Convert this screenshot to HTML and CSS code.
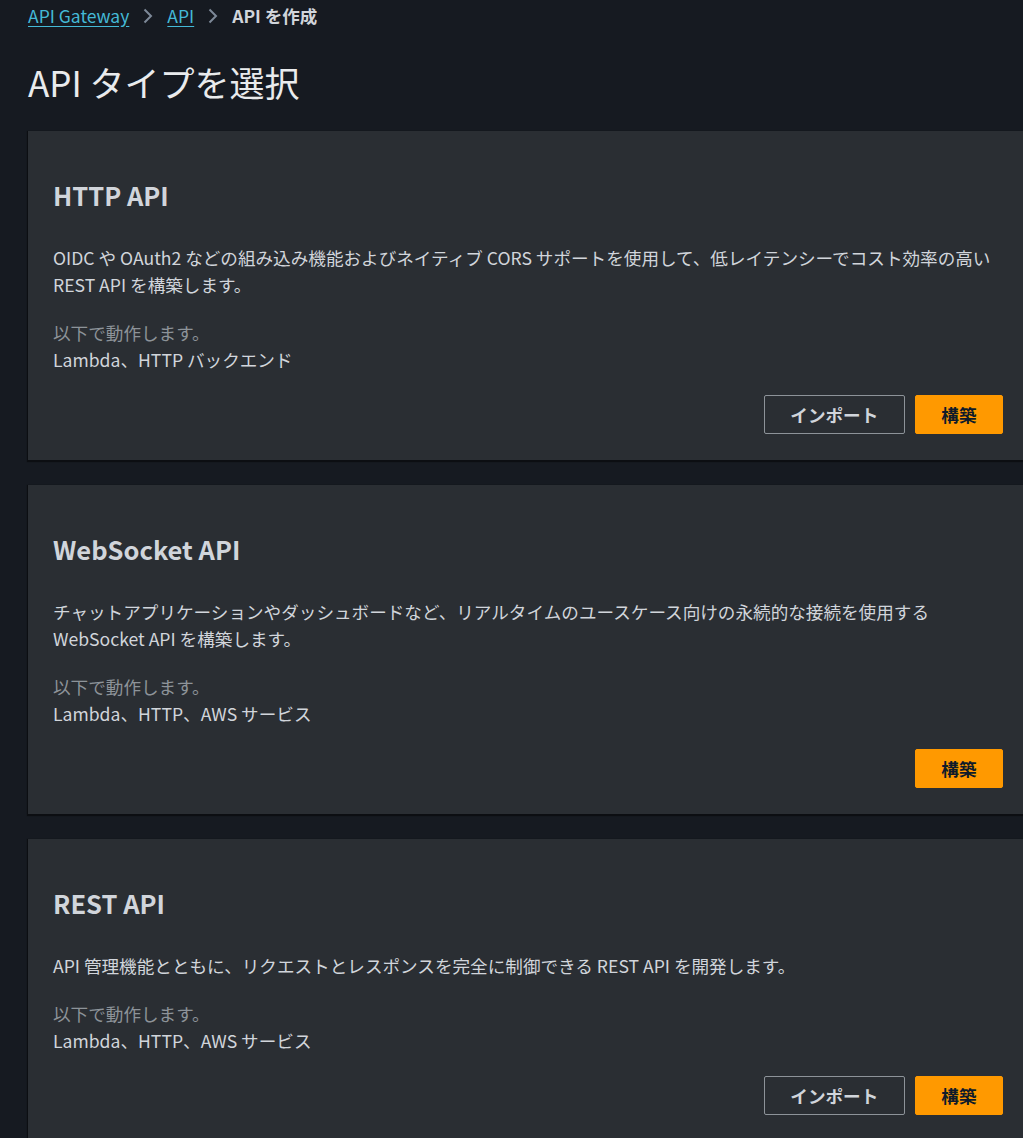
FILE: index.html
```html
<!DOCTYPE html>
<html lang="ja">
<head>
<meta charset="utf-8">
<title>API を作成</title>
<link rel="stylesheet" href="styles.css">
</head>
<body>
<nav class="crumbs">
  <a href="#" class="crumb-link">API Gateway</a>
  <svg class="chev" width="12" height="18" viewBox="0 0 12 18"><path d="M2.5 2.5l6.5 6.5-6.5 6.5" fill="none" stroke="currentColor" stroke-width="2"/></svg>
  <a href="#" class="crumb-link">API</a>
  <svg class="chev" width="12" height="18" viewBox="0 0 12 18"><path d="M2.5 2.5l6.5 6.5-6.5 6.5" fill="none" stroke="currentColor" stroke-width="2"/></svg>
  <span class="crumb-current">API を作成</span>
</nav>
<h1 class="page-title">API タイプを選択</h1>

<section class="card">
  <h2 class="card-title">HTTP API</h2>
  <p class="desc">OIDC や OAuth2 などの組み込み機能およびネイティブ CORS サポートを使用して、低レイテンシーでコスト効率の高い<br>REST API を構築します。</p>
  <p class="works">以下で動作します。</p>
  <p class="backends">Lambda、HTTP バックエンド</p>
  <div class="actions">
    <button class="btn btn-normal">インポート</button>
    <button class="btn btn-primary">構築</button>
  </div>
</section>

<section class="card">
  <h2 class="card-title">WebSocket API</h2>
  <p class="desc">チャットアプリケーションやダッシュボードなど、リアルタイムのユースケース向けの永続的な接続を使用する<br>WebSocket API を構築します。</p>
  <p class="works">以下で動作します。</p>
  <p class="backends">Lambda、HTTP、AWS サービス</p>
  <div class="actions">
    <button class="btn btn-primary">構築</button>
  </div>
</section>

<section class="card">
  <h2 class="card-title">REST API</h2>
  <p class="desc">API 管理機能とともに、リクエストとレスポンスを完全に制御できる REST API を開発します。</p>
  <p class="works">以下で動作します。</p>
  <p class="backends">Lambda、HTTP、AWS サービス</p>
  <div class="actions">
    <button class="btn btn-normal">インポート</button>
    <button class="btn btn-primary">構築</button>
  </div>
</section>
</body>
</html>
```

FILE: styles.css
```css
html, body {
  margin: 0;
  padding: 0;
  background: #161a21;
  overflow: hidden;
}
body {
  padding-left: 28px;
  font-family: "Noto Sans CJK JP", "Noto Sans", sans-serif;
  color: #d1d5db;
  height: 1138px;
}
.crumbs {
  display: flex;
  align-items: center;
  gap: 13px;
  height: 22px;
  padding-top: 5px;
  font-size: 17.5px;
  line-height: 22px;
}
.crumb-link {
  color: #44b9d6;
  text-decoration: underline;
  text-underline-offset: 3px;
}
.chev {
  color: #7d8998;
}
.crumb-current {
  font-weight: 700;
  color: #d1d5db;
}
.page-title {
  margin: 34px 0 0 0;
  font-size: 35px;
  line-height: 42px;
  font-weight: 400;
  color: #e9ebed;
}
.card {
  background: #2a2e33;
  box-shadow: 0 1px 1px 1px rgba(0,0,0,0.45);
  padding: 49px 20px 26px 25px;
  margin-top: 25px;
}
.page-title + .card {
  margin-top: 28px;
}
.card-title {
  margin: 0;
  font-size: 25.5px;
  line-height: 30px;
  font-weight: 700;
  color: #d1d5db;
}
.desc {
  margin: 34px 0 0 0;
  font-size: 17.6px;
  line-height: 27px;
  color: #d1d5db;
}
.works {
  margin: 21px 0 0 0;
  font-size: 17.6px;
  line-height: 27px;
  color: #8d9399;
}
.backends {
  margin: 0;
  font-size: 17.6px;
  line-height: 27px;
  color: #d1d5db;
}
.actions {
  display: flex;
  justify-content: flex-end;
  gap: 10px;
  margin-top: 22px;
}
.btn {
  height: 39px;
  font-family: inherit;
  font-size: 17.6px;
  font-weight: 700;
  border-radius: 2px;
  padding: 0 25.5px;
  cursor: pointer;
}
.btn-normal {
  background: transparent;
  border: 1px solid #8d9399;
  color: #d1d5db;
}
.btn-primary {
  background: #ff9900;
  border: 1px solid #ff9900;
  color: #0f1b2a;
}
```
